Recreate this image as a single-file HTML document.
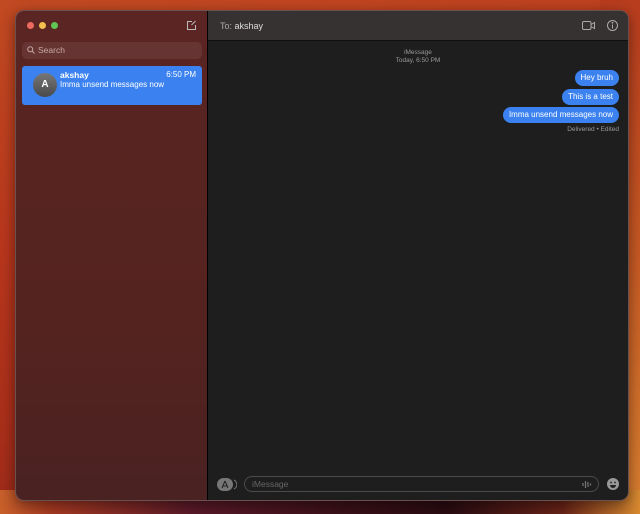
<!DOCTYPE html>
<html><head><meta charset="utf-8"><style>
*{margin:0;padding:0;box-sizing:border-box}
body{width:640px;height:514px;overflow:hidden;font-family:"Liberation Sans",sans-serif;position:relative;
background:linear-gradient(170deg,#c24a22 0%,#b8361c 40%,#a82e1a 70%,#8a2418 100%);}
.bg2{position:absolute;right:0;top:0;width:40px;height:514px;background:linear-gradient(180deg,#b83c1e,#c85a24 50%,#d88030 100%)}
.bg3{position:absolute;left:0;top:490px;width:640px;height:24px;background:linear-gradient(90deg,#c8602a 0%,#a83a22 8%,#5a1a28 30%,#3a1018 55%,#2a0c12 70%,#6a2418 88%,#d88a30 100%)}
.win{position:absolute;left:15px;top:10px;width:614px;height:491px;border-radius:9px;overflow:hidden;border:1px solid #6b5050;box-shadow:0 4px 14px rgba(0,0,0,.45)}
.side{position:absolute;left:0;top:0;width:192px;height:100%;background:linear-gradient(180deg,#5a2522,#55231f 60%,#4a2222);border-right:1px solid #000}
.main{position:absolute;left:192px;top:0;right:0;height:100%;background:#1e1e1e}
.hdr{height:30px;background:#363232;border-bottom:1px solid #111;color:#ddd;font-size:9px;padding:10px 12px}
.dot{position:absolute;top:11px;width:7px;height:7px;border-radius:50%}
.search{position:absolute;left:6px;top:31px;width:180px;height:17px;border-radius:5px;background:#663533;color:#c9a9a6;font-size:8.5px;padding:3px 0 0 16px}
.sel{position:absolute;left:6px;top:55px;width:180px;height:39px;border-radius:3px;background:#3b82f0;color:#fff}
.av{position:absolute;left:11px;top:7px;width:24px;height:24px;border-radius:50%;background:linear-gradient(#777,#4a4a4a);font-weight:bold;font-size:10px;text-align:center;line-height:24px}
.b{position:absolute;right:9px;background:#3b82f0;color:#fff;font-size:8px;height:16px;line-height:16px;padding:0 6px;border-radius:9px}
</style></head><body>
<div class="bg2"></div><div class="bg3"></div>
<div class="win">
<div class="side">
<div class="dot" style="left:11px;background:#ed6a5e"></div>
<div class="dot" style="left:23px;background:#f4bf4f"></div>
<div class="dot" style="left:35px;background:#61c554"></div>
<svg style="position:absolute;left:170px;top:9px" width="11" height="11" viewBox="0 0 11 11" fill="none" stroke="#bbb" stroke-width="1"><path d="M6 1.5H1.5v8h8V5"/><path d="M9.5 1l-4 4"/></svg>
<div class="search"><svg style="position:absolute;left:5px;top:4px" width="8" height="8" viewBox="0 0 8 8" fill="none" stroke="#c9a9a6" stroke-width="1"><circle cx="3.2" cy="3.2" r="2.5"/><path d="M5 5l2.5 2.5"/></svg>Search</div>
<div class="sel"><div class="av">A</div>
<div style="position:absolute;left:38px;top:4px;font-size:8.5px;font-weight:bold">akshay</div>
<div style="position:absolute;right:6px;top:4px;font-size:8px">6:50 PM</div>
<div style="position:absolute;left:38px;top:14px;font-size:8px">Imma unsend messages now</div></div>
</div>
<div class="main">
<div class="hdr"><span style="color:#aaa">To:</span> akshay
<svg style="position:absolute;right:33px;top:10px" width="13" height="9" viewBox="0 0 13 9" fill="none" stroke="#aaa" stroke-width="1"><rect x=".5" y=".5" width="8.5" height="8" rx="1.5"/><path d="M9 3.5l3.5-2v6L9 5.5"/></svg>
<svg style="position:absolute;right:10px;top:9px" width="11" height="11" viewBox="0 0 11 11" fill="none" stroke="#aaa" stroke-width="1"><circle cx="5.5" cy="5.5" r="5"/><path d="M5.5 4.5v4"/><circle cx="5.5" cy="2.8" r=".4" fill="#aaa"/></svg></div>
<div style="position:absolute;left:0;right:0;top:38px;text-align:center;color:#999;font-size:6.5px;line-height:8px">iMessage<br>Today, 6:50 PM</div>
<div class="b" style="top:59px">Hey bruh</div>
<div class="b" style="top:78px">This is a test</div>
<div class="b" style="top:96px">Imma unsend messages now</div>
<div style="position:absolute;right:9px;top:115px;color:#999;font-size:6.5px">Delivered • Edited</div>
<svg style="position:absolute;left:9px;top:467px" width="20" height="13" viewBox="0 0 20 13"><rect x="0" y="0" width="16" height="13" rx="6.5" fill="#777"/><path d="M17 2a5 5 0 0 1 0 9" stroke="#777" fill="none"/><path d="M8 3L5 10M8 3l3 7M5.5 8h5" stroke="#222" stroke-width="1" fill="none"/></svg>
<div style="position:absolute;left:36px;top:465px;width:355px;height:16px;border:1px solid #4a4a4a;border-radius:8px;color:#666;font-size:8.5px;padding:2px 0 0 7px">iMessage
<svg style="position:absolute;right:6px;top:3px" width="10" height="9" viewBox="0 0 10 9" stroke="#777" stroke-width="1.2"><path d="M1 3v3M3.5 1v7M6 2v5M8.5 3.5v2"/></svg></div>
<svg style="position:absolute;right:9px;top:467px" width="12" height="12" viewBox="0 0 12 12"><circle cx="6" cy="6" r="6" fill="#999"/><circle cx="4" cy="4.5" r=".9" fill="#222"/><circle cx="8" cy="4.5" r=".9" fill="#222"/><path d="M3 7h6a3 3 0 0 1-6 0z" fill="#222"/></svg>
</div>
</div>
</body></html>
